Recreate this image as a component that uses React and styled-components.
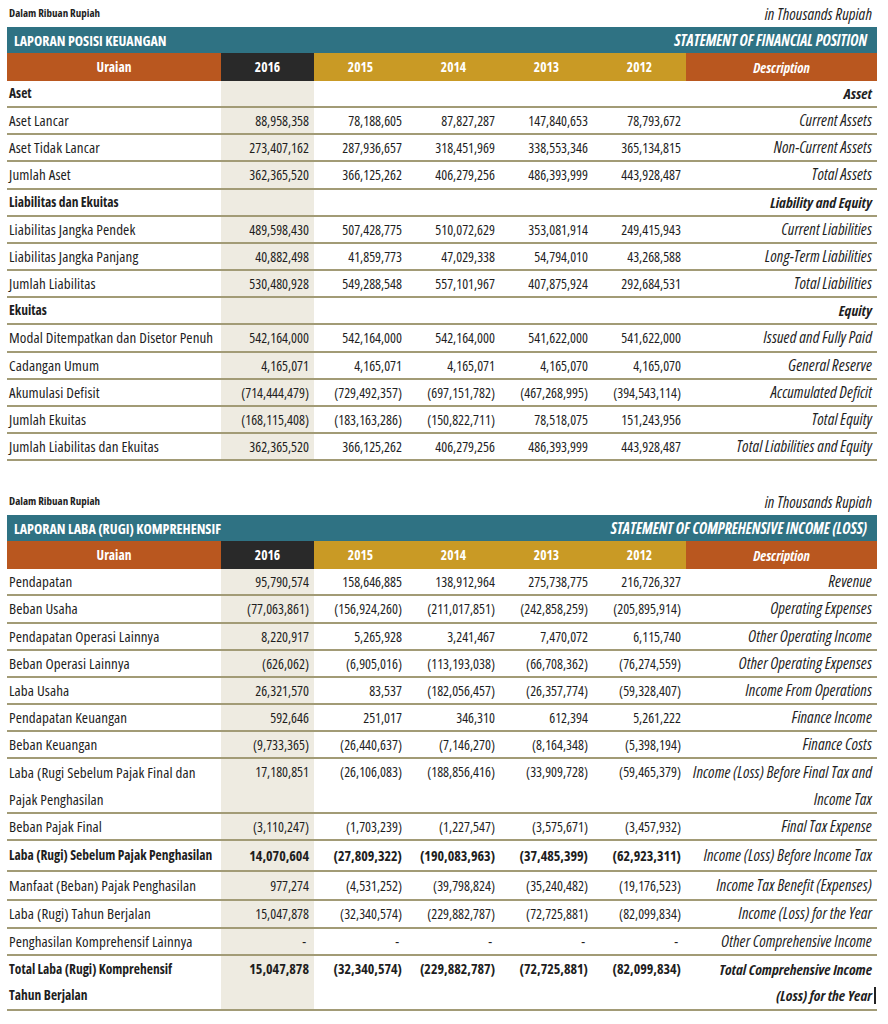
import React from "react";
import styled, { createGlobalStyle } from "styled-components";

const GlobalStyle = createGlobalStyle`
  html, body { margin: 0; padding: 0; background: #ffffff; }
  body {
    font-family: "Open Sans", "Roboto", sans-serif;
    font-stretch: 75%;
    color: #1e1e1e;
  }
`;

const COLS = "214px 93px 93px 93px 93px 93px 191px";

const Page = styled.div`
  width: 870px;
  padding: 0 11px 0 7px;
  display: flex;
  flex-direction: column;
  gap: 27px;
`;

const Section = styled.section`
  display: flex;
  flex-direction: column;
`;

const Caption = styled.div`
  height: 27px;
  display: flex;
  justify-content: space-between;
  align-items: center;
  padding: 0 5px 0 2px;
`;

const CaptionLeft = styled.span`
  font-size: 11px;
  font-weight: 700;
  margin-top: -3px;
`;

const CaptionRight = styled.span`
  font-size: 16px;
  font-style: italic;
  letter-spacing: 0.1px;
  margin-top: 1px;
`;

const TitleBar = styled.div`
  height: 26px;
  background: #2f7283;
  color: #ffffff;
  display: flex;
  justify-content: space-between;
  align-items: center;
  padding: 0 10px 0 7px;
  font-size: 14px;
  font-weight: 700;
`;

const TitleRight = styled.span`
  font-style: italic;
  font-size: 15.3px;
`;

const HeadRow = styled.div`
  display: grid;
  grid-template-columns: ${COLS};
  height: 28px;
`;

const HeadCell = styled.div`
  display: flex;
  align-items: center;
  justify-content: center;
  color: #ffffff;
  font-size: ${(p) => (p.$italic ? 14 : 13.5)}px;
  font-weight: 700;
  font-style: ${(p) => (p.$italic ? "italic" : "normal")};
  background: ${(p) => p.$bg};
`;

const Row = styled.div`
  display: grid;
  grid-template-columns: ${COLS};
  border-bottom: 2px solid #a29b76;
  font-size: 14px;
  line-height: ${(p) => p.$lh || 25.15}px;
`;

const Label = styled.div`
  padding-left: 2px;
  font-size: ${(p) => (p.$bold ? 13.5 : 15)}px;
  letter-spacing: ${(p) => (p.$bold ? 0 : 0.1)}px;
  font-weight: ${(p) => (p.$bold ? 700 : 400)};
  white-space: nowrap;
`;

const Num = styled.div`
  text-align: right;
  padding-right: 5px;
  white-space: nowrap;
  font-weight: ${(p) => (p.$bold ? 700 : 400)};
  background: ${(p) => (p.$hl ? "#eeebe1" : "transparent")};
`;

const Dash = styled.span`
  display: inline-block;
  margin-right: 3px;
`;

const Desc = styled.div`
  text-align: right;
  padding-right: 5px;
  font-style: italic;
  white-space: nowrap;
  font-size: ${(p) => (p.$bold ? 15 : 16)}px;
  letter-spacing: ${(p) => (p.$bold ? 0 : 0.1)}px;
  font-weight: ${(p) => (p.$bold ? 700 : 400)};
`;

const Caret = styled.span`
  display: inline-block;
  width: 2px;
  height: 17px;
  background: #222;
  vertical-align: -3px;
  margin-left: 2px;
  margin-right: -4px;
`;

const YEARS = ["2016", "2015", "2014", "2013", "2012"];

const balance = [
  { label: "Aset", desc: "Asset", section: true },
  { label: "Aset Lancar", v: ["88,958,358", "78,188,605", "87,827,287", "147,840,653", "78,793,672"], desc: "Current Assets" },
  { label: "Aset Tidak Lancar", v: ["273,407,162", "287,936,657", "318,451,969", "338,553,346", "365,134,815"], desc: "Non-Current Assets" },
  { label: "Jumlah Aset", v: ["362,365,520", "366,125,262", "406,279,256", "486,393,999", "443,928,487"], desc: "Total Assets" },
  { label: "Liabilitas dan Ekuitas", desc: "Liability and Equity", section: true },
  { label: "Liabilitas Jangka Pendek", v: ["489,598,430", "507,428,775", "510,072,629", "353,081,914", "249,415,943"], desc: "Current Liabilities" },
  { label: "Liabilitas Jangka Panjang", v: ["40,882,498", "41,859,773", "47,029,338", "54,794,010", "43,268,588"], desc: "Long-Term Liabilities" },
  { label: "Jumlah Liabilitas", v: ["530,480,928", "549,288,548", "557,101,967", "407,875,924", "292,684,531"], desc: "Total Liabilities" },
  { label: "Ekuitas", desc: "Equity", section: true },
  { label: "Modal Ditempatkan dan Disetor Penuh", v: ["542,164,000", "542,164,000", "542,164,000", "541,622,000", "541,622,000"], desc: "Issued and Fully Paid" },
  { label: "Cadangan Umum", v: ["4,165,071", "4,165,071", "4,165,071", "4,165,070", "4,165,070"], desc: "General Reserve" },
  { label: "Akumulasi Defisit", v: ["(714,444,479)", "(729,492,357)", "(697,151,782)", "(467,268,995)", "(394,543,114)"], desc: "Accumulated Deficit" },
  { label: "Jumlah Ekuitas", v: ["(168,115,408)", "(183,163,286)", "(150,822,711)", "78,518,075", "151,243,956"], desc: "Total Equity" },
  { label: "Jumlah Liabilitas dan Ekuitas", v: ["362,365,520", "366,125,262", "406,279,256", "486,393,999", "443,928,487"], desc: "Total Liabilities and Equity" },
];

const income = [
  { label: "Pendapatan", v: ["95,790,574", "158,646,885", "138,912,964", "275,738,775", "216,726,327"], desc: "Revenue" },
  { label: "Beban Usaha", v: ["(77,063,861)", "(156,924,260)", "(211,017,851)", "(242,858,259)", "(205,895,914)"], desc: "Operating Expenses" },
  { label: "Pendapatan Operasi Lainnya", v: ["8,220,917", "5,265,928", "3,241,467", "7,470,072", "6,115,740"], desc: "Other Operating Income" },
  { label: "Beban Operasi Lainnya", v: ["(626,062)", "(6,905,016)", "(113,193,038)", "(66,708,362)", "(76,274,559)"], desc: "Other Operating Expenses" },
  { label: "Laba Usaha", v: ["26,321,570", "83,537", "(182,056,457)", "(26,357,774)", "(59,328,407)"], desc: "Income From Operations" },
  { label: "Pendapatan Keuangan", v: ["592,646", "251,017", "346,310", "612,394", "5,261,222"], desc: "Finance Income" },
  { label: "Beban Keuangan", v: ["(9,733,365)", "(26,440,637)", "(7,146,270)", "(8,164,348)", "(5,398,194)"], desc: "Finance Costs" },
  { label: ["Laba (Rugi Sebelum Pajak Final dan", "Pajak Penghasilan"], v: ["17,180,851", "(26,106,083)", "(188,856,416)", "(33,909,728)", "(59,465,379)"], desc: ["Income (Loss) Before Final Tax and", "Income Tax"], lh: 26.5 },
  { label: "Beban Pajak Final", v: ["(3,110,247)", "(1,703,239)", "(1,227,547)", "(3,575,671)", "(3,457,932)"], desc: "Final Tax Expense" },
  { label: "Laba (Rugi) Sebelum Pajak Penghasilan", v: ["14,070,604", "(27,809,322)", "(190,083,963)", "(37,485,399)", "(62,923,311)"], desc: "Income (Loss) Before Income Tax", bold: true, lh: 29 },
  { label: "Manfaat (Beban) Pajak Penghasilan", v: ["977,274", "(4,531,252)", "(39,798,824)", "(35,240,482)", "(19,176,523)"], desc: "Income Tax Benefit (Expenses)", lh: 27 },
  { label: "Laba (Rugi) Tahun Berjalan", v: ["15,047,878", "(32,340,574)", "(229,882,787)", "(72,725,881)", "(82,099,834)"], desc: "Income (Loss) for the Year" },
  { label: "Penghasilan Komprehensif Lainnya", v: ["-", "-", "-", "-", "-"], desc: "Other Comprehensive Income" },
  { label: ["Total Laba (Rugi) Komprehensif", "Tahun Berjalan"], v: ["15,047,878", "(32,340,574)", "(229,882,787)", "(72,725,881)", "(82,099,834)"], desc: ["Total Comprehensive Income", "(Loss) for the Year"], bold: true, descBold: true, lh: 26.5, caret: true },
];

function Lines({ value, caret }) {
  if (Array.isArray(value)) {
    return value.map((t, i) => (
      <React.Fragment key={i}>
        {i > 0 && <br />}
        {t}
        {caret && i === value.length - 1 && <Caret />}
      </React.Fragment>
    ));
  }
  return value;
}

function DataRow({ r }) {
  const sec = r.section;
  return (
    <Row $lh={r.lh}>
      <Label $bold={sec || r.bold}>
        <Lines value={r.label} />
      </Label>
      {YEARS.map((y, i) => {
        const val = r.v ? r.v[i] : "";
        return (
          <Num key={y} $hl={i === 0} $bold={r.bold}>
            {val === "-" ? <Dash>-</Dash> : val}
          </Num>
        );
      })}
      <Desc $bold={sec || r.descBold}>
        <Lines value={r.desc} caret={r.caret} />
      </Desc>
    </Row>
  );
}

function Statement({ title, titleEn, rows }) {
  return (
    <Section>
      <Caption>
        <CaptionLeft>Dalam Ribuan Rupiah</CaptionLeft>
        <CaptionRight>in Thousands Rupiah</CaptionRight>
      </Caption>
      <TitleBar>
        <span>{title}</span>
        <TitleRight>{titleEn}</TitleRight>
      </TitleBar>
      <HeadRow>
        <HeadCell $bg="#b9571f">Uraian</HeadCell>
        {YEARS.map((y, i) => (
          <HeadCell key={y} $bg={i === 0 ? "#292929" : "#c99a25"}>
            {y}
          </HeadCell>
        ))}
        <HeadCell $bg="#b9571f" $italic>
          Description
        </HeadCell>
      </HeadRow>
      {rows.map((r, i) => (
        <DataRow key={i} r={r} />
      ))}
    </Section>
  );
}

export default function App() {
  return (
    <>
      <GlobalStyle />
      <Page>
        <Statement title="LAPORAN POSISI KEUANGAN" titleEn="STATEMENT OF FINANCIAL POSITION" rows={balance} />
        <Statement title="LAPORAN LABA (RUGI) KOMPREHENSIF" titleEn="STATEMENT OF COMPREHENSIVE INCOME (LOSS)" rows={income} />
      </Page>
    </>
  );
}
